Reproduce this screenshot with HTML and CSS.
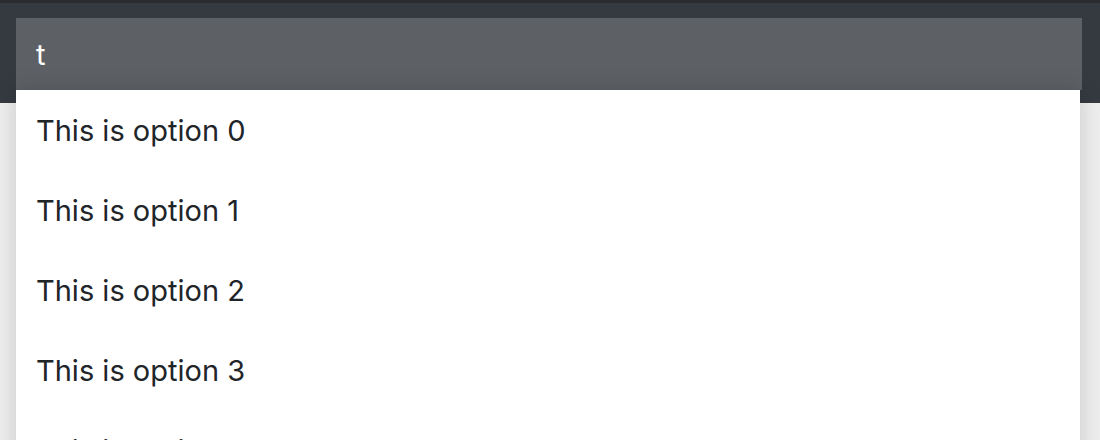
FILE: index.html
```html
<!DOCTYPE html>
<html>
<head>
<meta charset="utf-8">
<link rel="stylesheet" href="styles.css">
</head>
<body>
<div class="topline"></div>
<header class="header">
  <div class="search">
    <div class="input">t</div>
    <ul class="menu">
      <li class="item">This is option 0</li>
      <li class="item">This is option 1</li>
      <li class="item">This is option 2</li>
      <li class="item">This is option 3</li>
      <li class="item">This is option 4</li>
    </ul>
  </div>
</header>
<main class="page"></main>
</body>
</html>
```
FILE: styles.css
```css
html, body {
  margin: 0;
  padding: 0;
  height: 100%;
  overflow: hidden;
  background: #eeeeee;
  font-family: Inter, "Noto Sans", "Liberation Sans", sans-serif;
}
.topline {
  height: 3px;
  background: #2a2b2e;
}
.header {
  height: 100px;
  background: #343a40;
  padding: 15px 18px 0 16px;
  box-sizing: border-box;
}
.search {
  position: relative;
}
.input {
  height: 72px;
  background: #5d6166;
  color: #ffffff;
  font-size: 29px;
  line-height: 72px;
  padding: 1px 0 0 20px;
  box-sizing: border-box;
}
.menu {
  position: absolute;
  top: 72px;
  left: 0;
  right: 2px;
  margin: 0;
  padding: 0;
  list-style: none;
  background: #ffffff;
  box-shadow: 0 0 22px rgba(0, 0, 0, 0.16);
}
.item {
  height: 80px;
  line-height: 80px;
  padding: 1px 0 0 20px;
  box-sizing: border-box;
  font-size: 29px;
  color: #212529;
}
```
